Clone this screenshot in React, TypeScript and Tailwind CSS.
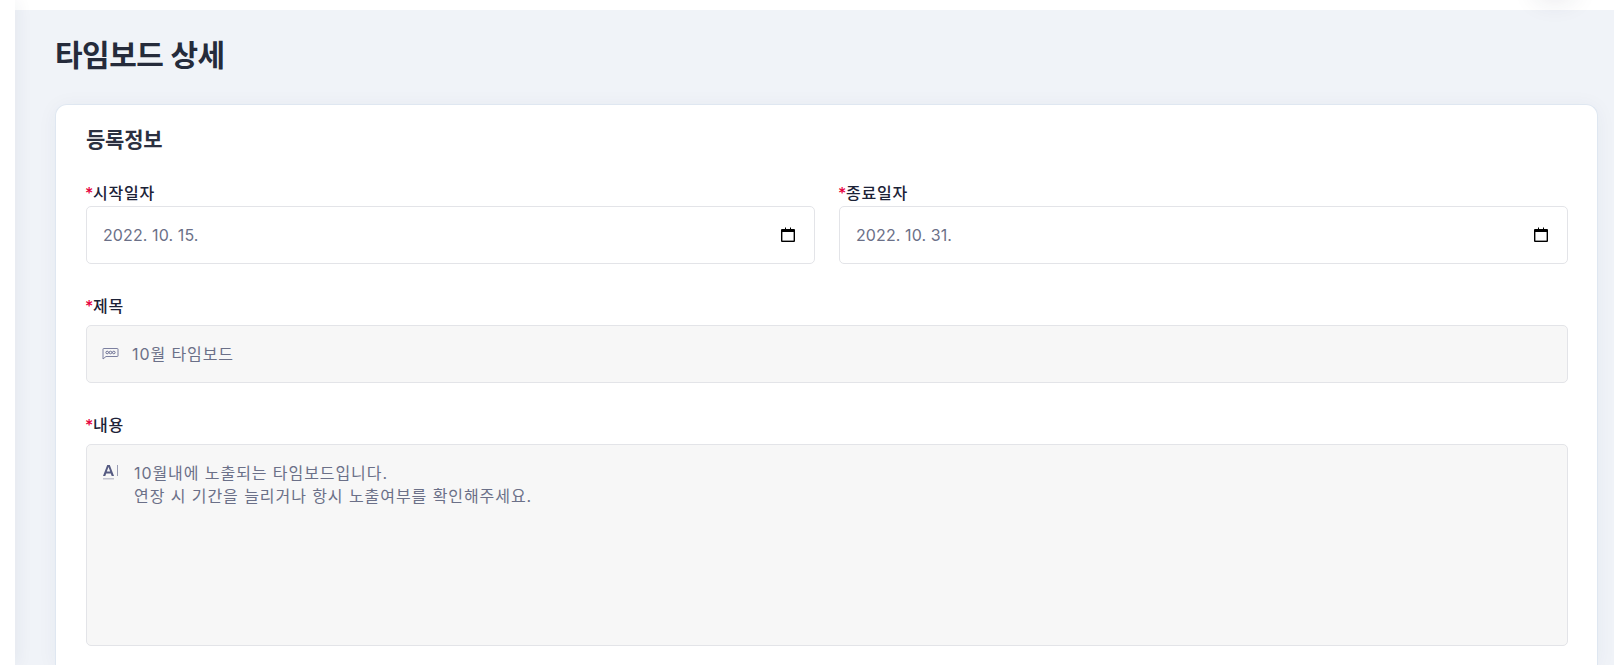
const font = "font-['Inter','Noto_Sans_CJK_KR',sans-serif]";

function Label({ text }: { text: string }) {
  return (
    <div className="flex h-[20px] items-center text-[16px] font-medium leading-[20px] text-[#1c2237]">
      <span className="-ml-[1px] tracking-[-0.4px] text-[#e6003c]">*</span>
      <span className="tracking-[0.8px]">{text}</span>
    </div>
  );
}

function CalendarIcon() {
  return (
    <svg width="14" height="16" viewBox="0 0 14 16" className="shrink-0">
      <path d="M1 2h3V0.5h1V2h4V0.5h1V2h3a1 1 0 0 1 1 1v11a1 1 0 0 1-1 1H1a1 1 0 0 1-1-1V3a1 1 0 0 1 1-1z" fill="#000" />
      <rect x="1.4" y="5" width="11.2" height="8.6" fill="#fff" />
    </svg>
  );
}

function DateField({ label, value }: { label: string; value: string }) {
  return (
    <div className="flex min-w-0 flex-1 flex-col gap-[3px]">
      <Label text={label} />
      <div className="flex h-[58px] items-center justify-between rounded-[5px] border border-[#e3e4e8] bg-white pl-[16px] pr-[19px] text-[16px] tracking-[0.1px] text-[#6b7088]">
        <span>{value}</span>
        <CalendarIcon />
      </div>
    </div>
  );
}

function MessageIcon() {
  return (
    <svg width="17" height="14" viewBox="0 0 17 14" className="-ml-[1.5px] shrink-0" fill="none">
      <path d="M1.5 1.5h14a.5.5 0 0 1 .5.5v7a.5.5 0 0 1-.5.5H4L1 12V2a.5.5 0 0 1 .5-.5z" stroke="#7c80a0" strokeWidth="1" />
      <circle cx="5.2" cy="5.5" r="1.3" stroke="#60648a" strokeWidth=".9" />
      <circle cx="8.5" cy="5.5" r="1.3" stroke="#60648a" strokeWidth=".9" />
      <circle cx="11.8" cy="5.5" r="1.3" stroke="#60648a" strokeWidth=".9" />
    </svg>
  );
}

function TextIcon() {
  return (
    <svg width="16" height="16" viewBox="0 0 16 16" className="mt-[2px] shrink-0" fill="none">
      <path d="M0 12 4.2 1h2.6L11 12H8.7l-.9-2.5H3.2L2.3 12zM3.8 7.6h3.4L5.5 3z" fill="#565b82" />
      <rect x="14" y="1" width="1" height="11" fill="#9a9db5" />
      <rect x="0" y="14" width="11" height="1.5" fill="#c3c4d0" />
    </svg>
  );
}

export default function App() {
  return (
    <div className={`${font} relative flex h-[665px] w-[1614px] overflow-hidden bg-white`}>
      <aside className="relative z-10 w-[15px] shrink-0 bg-white shadow-[3px_0_16px_rgba(30,50,90,0.06)]" />
      <div className="flex min-w-0 flex-1 flex-col">
        <header className="h-[10px] shrink-0 bg-white" />
        <main className="flex min-h-0 flex-1 flex-col bg-[#f0f3f8] pl-[40px] pr-[16px]">
          <h1 className="mt-[25px] h-[40px] text-[30px] font-semibold leading-[40px] tracking-[-0.5px] text-[#252b3b]">타임보드 상세</h1>
          <section className="mt-[29px] flex-1 rounded-t-[12px] border border-b-0 border-[#dfe7f1] bg-white pl-[30px] pr-[29px] shadow-[0_2px_20px_rgba(30,50,90,0.05)]">
            <h2 className="mt-[21px] h-[28px] text-[21px] font-semibold leading-[28px] tracking-[-0.25px] text-[#2b3040]">등록정보</h2>
            <div className="mt-[29px] flex gap-[24px]">
              <DateField label="시작일자" value="2022. 10. 15." />
              <DateField label="종료일자" value="2022. 10. 31." />
            </div>
            <div className="mt-[32px] flex flex-col gap-[9px]">
              <Label text="제목" />
              <div className="flex h-[58px] items-center gap-[13.5px] rounded-[5px] border border-[#e3e4e8] bg-[#f7f7f7] px-[16px] text-[16px] tracking-[0.9px] text-[#6b7088]">
                <MessageIcon />
                <span>10월 타임보드</span>
              </div>
            </div>
            <div className="mt-[32px] flex flex-col gap-[9px]">
              <Label text="내용" />
              <div className="flex h-[202px] items-start gap-[15px] rounded-[5px] border border-[#e3e4e8] bg-[#f7f7f7] px-[16px] pt-[17px] text-[16px] leading-[23px] tracking-[0.93px] text-[#6b7088]">
                <TextIcon />
                <p>
                  10월내에 노출되는 타임보드입니다.
                  <br />
                  연장 시 기간을 늘리거나 항시 노출여부를 확인해주세요.
                </p>
              </div>
            </div>
          </section>
        </main>
      </div>
      <div className="absolute left-[1535px] top-[-22px] h-[22px] w-[40px] rounded-full shadow-[0_0_26px_rgba(30,40,70,0.12)]" />
    </div>
  );
}
